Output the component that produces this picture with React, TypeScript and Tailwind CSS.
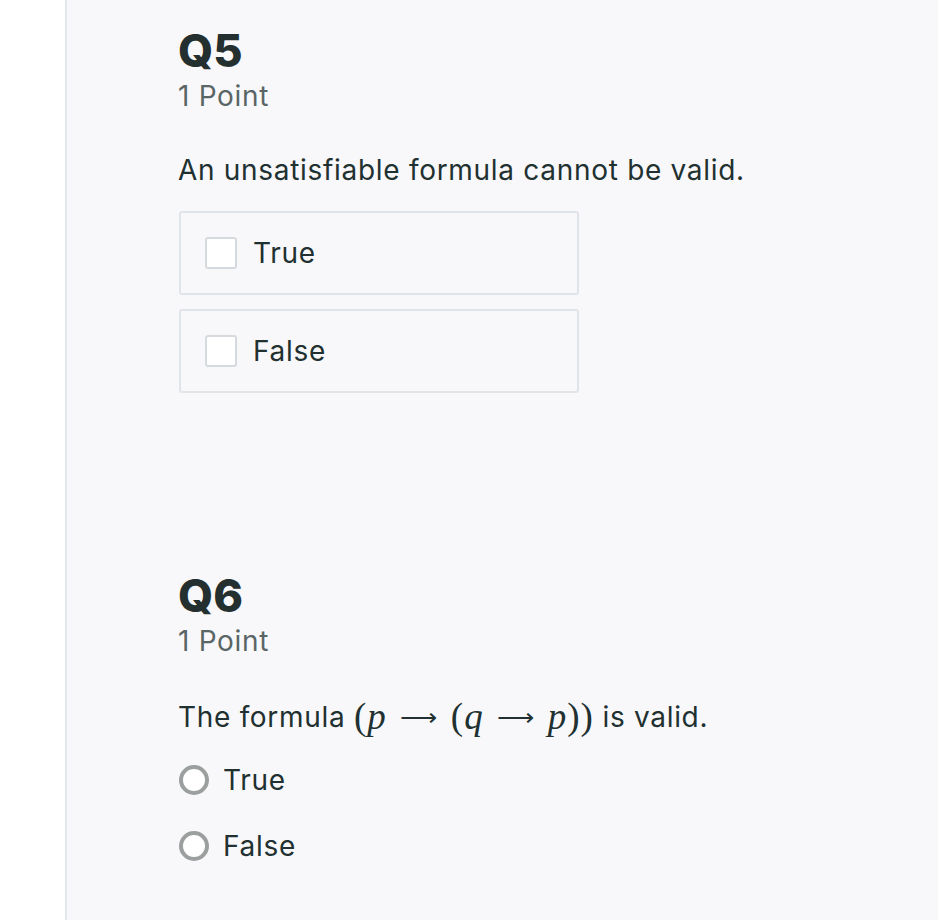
import React from "react";

const sans = { fontFamily: "Inter, 'Open Sans', sans-serif" } as React.CSSProperties;

function Checkbox({ label }: { label: string }) {
  return (
    <div className="flex h-[84px] w-[400px] items-center rounded-[3px] border-2 border-[#e1e4e9] pl-[24px]">
      <div className="h-[32px] w-[32px] rounded-[3px] border-2 border-[#d6dadf] bg-white" />
      <span className="ml-[16px] text-[28px] text-[#213030]">{label}</span>
    </div>
  );
}

function Radio({ label }: { label: string }) {
  return (
    <div className="flex h-[66px] items-center">
      <div className="h-[30px] w-[30px] rounded-full border-[4px] border-[#9ba09f] bg-white" />
      <span className="ml-[14px] text-[28px] text-[#213030]">{label}</span>
    </div>
  );
}

const serif = { fontFamily: "'Liberation Serif', 'DejaVu Serif', serif" } as React.CSSProperties;
const arrowFont = { fontFamily: "'DejaVu Sans', sans-serif" } as React.CSSProperties;

function Arrow() {
  return (
    <span style={arrowFont} className="mx-[13px] inline-block text-[26px] font-light text-[#213030]">
      ⟶
    </span>
  );
}

export default function App() {
  return (
    <div className="flex min-h-[920px] bg-white tracking-[0.7px]" style={sans}>
      <div className="w-[65px] shrink-0 bg-white" />
      <div className="flex-1 border-l-2 border-[#e3e6eb] bg-[#f8f8fa] pl-[111px]">
        <section className="pt-[25px]">
          <h2 className="text-[45px] font-extrabold leading-[52px] tracking-[0px] text-[#242f2f]">Q5</h2>
          <div className="mt-[2px] text-[28px] leading-[34px] text-[#5a6566]">1 Point</div>
          <p className="mt-[40px] text-[28px] leading-[34px] text-[#213030]">An unsatisfiable formula cannot be valid.</p>
          <div className="ml-[1px] mt-[24px] flex flex-col gap-[14px]">
            <Checkbox label="True" />
            <Checkbox label="False" />
          </div>
        </section>
        <section className="pt-[177px]">
          <h2 className="text-[45px] font-extrabold leading-[52px] tracking-[0px] text-[#242f2f]">Q6</h2>
          <div className="mt-[2px] text-[28px] leading-[34px] text-[#5a6566]">1 Point</div>
          <p className="mt-[37px] flex items-center text-[28px] leading-[44px] text-[#213030]">
            <span>The formula&nbsp;</span>
            <span style={serif} className="flex items-center text-[37px] tracking-[1px]">
              <span>(</span>
              <span className="italic">p</span>
              <Arrow />
              <span>(</span>
              <span className="italic">q</span>
              <Arrow />
              <span className="italic">p</span>
              <span>))</span>
            </span>
            <span>&nbsp;is valid.</span>
          </p>
          <div className="ml-[1px] mt-[8px] flex flex-col">
            <Radio label="True" />
            <Radio label="False" />
          </div>
        </section>
      </div>
    </div>
  );
}
